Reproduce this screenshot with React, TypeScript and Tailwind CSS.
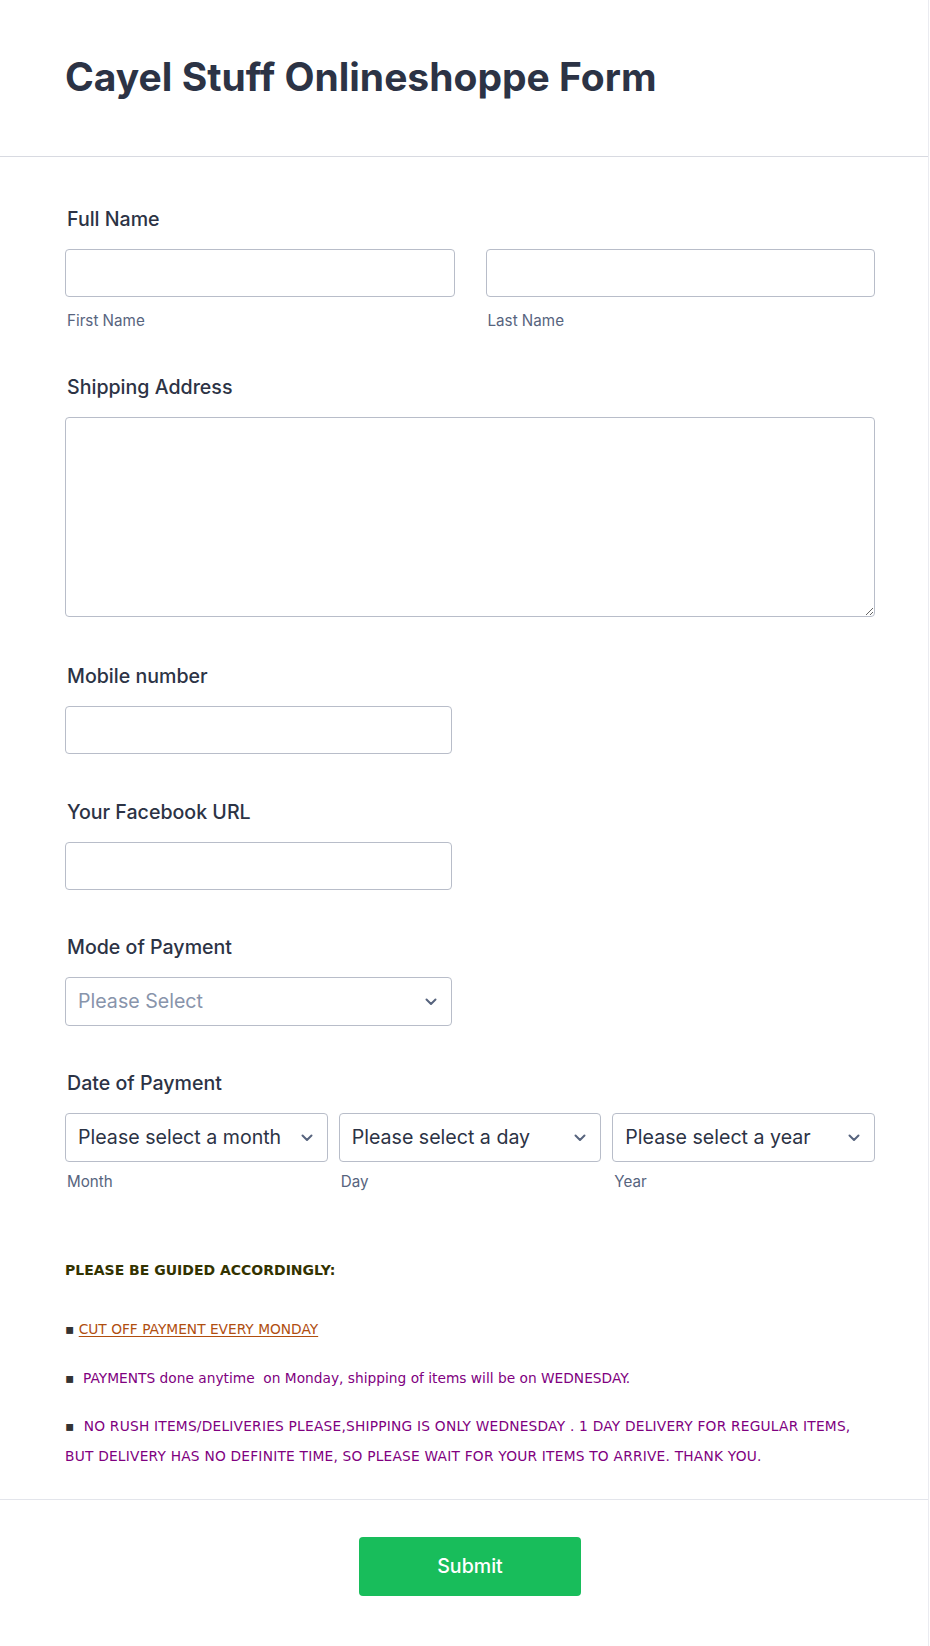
import React from "react";

const Chevron = () => (
    <svg width="12" height="8" viewBox="0 0 12 8" fill="none" className="shrink-0">
        <path d="M1.5 1.5L6 6L10.5 1.5" stroke="#57647e" strokeWidth="2" strokeLinecap="round" strokeLinejoin="round" />
    </svg>
);

const Label = ({ children }: { children: React.ReactNode }) => (
    <div className="h-[26px] text-[19.6px] leading-[26px] font-medium text-[#2c3345] mb-[17px] pl-[2px]">{children}</div>
);

const Sub = ({ children, className = "mt-[14px]" }: { children: React.ReactNode; className?: string }) => (
    <div className={`h-[20px] text-[15.2px] leading-[20px] text-[#57647e] pl-[2px] ${className}`}>{children}</div>
);

const Input = ({ className = "" }: { className?: string }) => (
    <input
        type="text"
        className={`block h-[48px] rounded-[4px] border border-[#b8bdc9] bg-white px-3 outline-none ${className}`}
    />
);

const Select = ({ text, placeholder = false, className = "" }: { text: string; placeholder?: boolean; className?: string }) => (
    <div
        className={`flex h-[49px] items-center justify-between rounded-[4px] border border-[#b8bdc9] bg-white pl-[12px] pr-[14px] ${className}`}>
        <span className={`whitespace-nowrap text-[19.6px] ${placeholder ? "text-[#8894ab]" : "text-[#2c3345]"}`}>{text}</span>
        <Chevron />
    </div>
);

export default function App() {
    return (
        <div className="min-h-[1646px] w-[930px] bg-white font-['Inter',sans-serif]">
            <div className="w-[929px] border-r border-[#eaebf0] min-h-[1646px]">
                <div className="flex h-[157px] items-center border-b border-[#d8dae1] px-[65px] pb-[2px]">
                    <h1 className="text-[39px] font-bold text-[#2c3345]">Cayel Stuff Onlineshoppe Form</h1>
                </div>

                <div className="pl-[65px] pr-[53px] pt-[49px]">
                    <Label>Full Name</Label>
                    <div className="flex gap-[31px]">
                        <div className="flex-1">
                            <Input className="w-full" />
                            <Sub>First Name</Sub>
                        </div>
                        <div className="flex-1">
                            <Input className="w-full" />
                            <Sub>Last Name</Sub>
                        </div>
                    </div>

                    <div className="mt-[43px]">
                        <Label>Shipping Address</Label>
                        <textarea className="block h-[200px] w-full rounded-[4px] border border-[#b8bdc9] bg-white p-3 outline-none" />
                    </div>

                    <div className="mt-[46px]">
                        <Label>Mobile number</Label>
                        <Input className="w-[387px]" />
                    </div>

                    <div className="mt-[45px]">
                        <Label>Your Facebook URL</Label>
                        <Input className="w-[387px]" />
                    </div>

                    <div className="mt-[44px]">
                        <Label>Mode of Payment</Label>
                        <Select text="Please Select" placeholder className="w-[387px]" />
                    </div>

                    <div className="mt-[44px]">
                        <Label>Date of Payment</Label>
                        <div className="flex gap-[11px]">
                            <div className="flex-1">
                                <Select text="Please select a month" />
                                <Sub className="mt-[10px]">Month</Sub>
                            </div>
                            <div className="flex-1">
                                <Select text="Please select a day" />
                                <Sub className="mt-[10px]">Day</Sub>
                            </div>
                            <div className="flex-1">
                                <Select text="Please select a year" />
                                <Sub className="mt-[10px]">Year</Sub>
                            </div>
                        </div>
                    </div>

                    <div className="mt-[63px] font-['DejaVu_Sans',Verdana,sans-serif] text-[13.75px] leading-[30px]">
                        <p className="font-bold text-[14px] text-[#333300]">PLEASE BE GUIDED ACCORDINGLY:</p>
                        <p className="mt-[29px] whitespace-pre-wrap">
                            <span className="text-[#333333]">▪ </span>
                            <span className="text-[#b04e0f] underline decoration-[#b04e0f] underline-offset-2">CUT OFF PAYMENT EVERY MONDAY</span>
                        </p>
                        <p className="mt-[19px] whitespace-pre-wrap text-[#800080]">
                            <span className="text-[#333333]">▪ </span> PAYMENTS done anytime  on Monday, shipping of items will be on WEDNESDAY.
                        </p>
                        <p className="mt-[18px] whitespace-pre-wrap tracking-[0.22px] text-[#800080]">
                            <span className="text-[#333333]">▪ </span> NO RUSH ITEMS/DELIVERIES PLEASE,SHIPPING IS ONLY WEDNESDAY . 1 DAY DELIVERY FOR REGULAR ITEMS,
                            <br />
                            BUT DELIVERY HAS NO DEFINITE TIME, SO PLEASE WAIT FOR YOUR ITEMS TO ARRIVE. THANK YOU.
                        </p>
                    </div>
                </div>

                <div className="mt-[28px] border-t border-[#e3e5eb] pt-[37px] pb-[50px] flex justify-center">
                    <button className="h-[59px] w-[222px] rounded-[4px] bg-[#18bd5b] text-[19.6px] font-medium text-white ml-[12px]">
                        Submit
                    </button>
                </div>
            </div>
        </div>
    );
}
